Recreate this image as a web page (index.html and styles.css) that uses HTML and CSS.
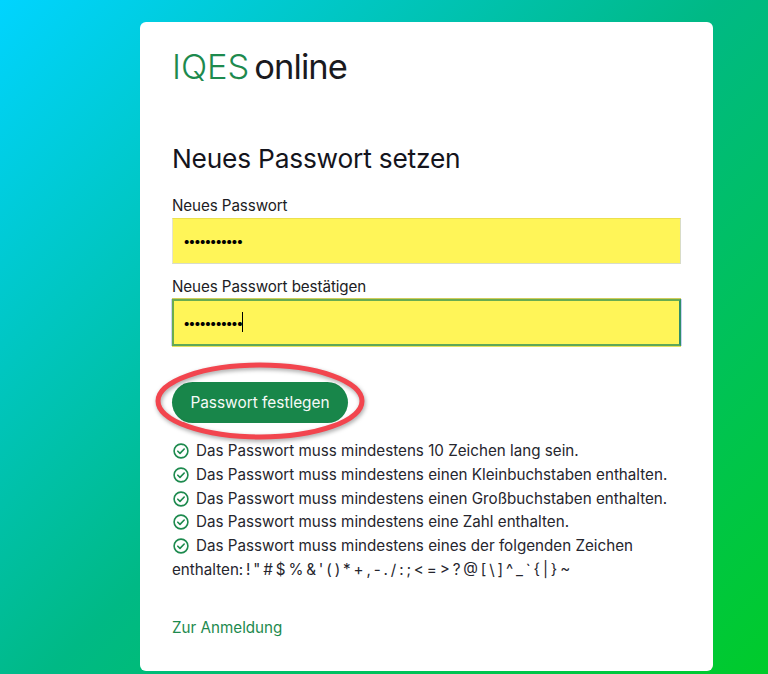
FILE: index.html
```html
<!DOCTYPE html>
<html lang="de">
<head>
<meta charset="utf-8">
<title>Neues Passwort setzen</title>
<link rel="stylesheet" href="styles.css">
</head>
<body>
<main class="card">
  <div class="logo"><span class="logo-iqes">IQES</span><span class="logo-online">online</span></div>
  <h1 class="title">Neues Passwort setzen</h1>
  <form class="form">
    <label class="label" for="p1">Neues Passwort</label>
    <div class="field"><input class="input" id="p1" type="password" value="aaaaaaaaaaa"></div>
    <label class="label label-second" for="p2">Neues Passwort bestätigen</label>
    <div class="field field-focus"><input class="input" id="p2" type="password" value="aaaaaaaaaaa"><span class="caret"></span></div>
    <div class="button-wrap">
      <button class="button" type="button">Passwort festlegen</button>
      <svg class="ring" viewBox="0 0 212 84" aria-hidden="true"><ellipse cx="106" cy="42" rx="102" ry="36" fill="none" stroke="#f2454e" stroke-width="5"/></svg>
    </div>
  </form>
  <ul class="rules">
    <li class="rule"><svg class="check" viewBox="0 0 16 16"><circle cx="8" cy="8" r="6.900"/><path d="M4.800 8.200l2.200 2.200 4.200-4.400"/></svg>Das Passwort muss mindestens 10 Zeichen lang sein.</li>
    <li class="rule"><svg class="check" viewBox="0 0 16 16"><circle cx="8" cy="8" r="6.900"/><path d="M4.800 8.200l2.200 2.200 4.200-4.400"/></svg>Das Passwort muss mindestens einen Kleinbuchstaben enthalten.</li>
    <li class="rule"><svg class="check" viewBox="0 0 16 16"><circle cx="8" cy="8" r="6.900"/><path d="M4.800 8.200l2.200 2.200 4.200-4.400"/></svg>Das Passwort muss mindestens einen Großbuchstaben enthalten.</li>
    <li class="rule"><svg class="check" viewBox="0 0 16 16"><circle cx="8" cy="8" r="6.900"/><path d="M4.800 8.200l2.200 2.200 4.200-4.400"/></svg>Das Passwort muss mindestens eine Zahl enthalten.</li>
    <li class="rule"><svg class="check" viewBox="0 0 16 16"><circle cx="8" cy="8" r="6.900"/><path d="M4.800 8.200l2.200 2.200 4.200-4.400"/></svg>Das Passwort muss mindestens eines der folgenden Zeichen <span class="symbols">enthalten: ! " # $ % &amp; ' ( ) * + , - . / : ; &lt; = &gt; ? @ [ \ ] ^ _ ` { | } ~</span></li>
  </ul>
  <a class="link" href="#">Zur Anmeldung</a>
</main>
</body>
</html>
```
FILE: styles.css
```css
* { box-sizing: border-box; }
html, body { margin: 0; height: 100%; }
body {
  height: 674px;
  overflow: hidden;
  padding: 22px 55px 3px 140px;
  background: linear-gradient(135deg, #00d4ff 0%, #00b985 50%, #00cb2a 100%);
  font-family: Inter, "Liberation Sans", sans-serif;
  color: #1c1c24;
}
.card {
  height: 649px;
  padding: 27px 32px 0;
  background: #fff;
  border-radius: 6px;
}
.logo {
  display: flex;
  align-items: baseline;
  height: 36px;
  font-size: 34.500px;
  line-height: 36px;
  letter-spacing: -0.9px;
}
.logo-iqes { color: #1d8a4e; font-weight: 300; margin-right: 5px; letter-spacing: -0.1px; }
.logo-online { color: #1a1a1e; font-weight: 400; }
.title {
  margin: 58px 0 0;
  font-size: 26.300px;
  line-height: 32px;
  font-weight: 400;
  color: #14141c;
  letter-spacing: -0.2px;
}
.form { margin-top: 21px; }
.label {
  display: block;
  font-size: 15.200px;
  line-height: 20px;
  height: 20px;
  letter-spacing: -0.1px;
}
.label-second { margin-top: 13px; }
.field {
  position: relative;
  height: 46px;
  margin-top: 2px;
  background: #fff558;
  border: 1px solid #e4e4cc;
  border-top-color: #ece04e;
  border-right-color: #d8dcc8;
  border-bottom-color: #d8dcc8;
}
.field-focus {
  height: 47px;
  margin-top: 2px;
  border: 2px solid #69ac50;
  border-right-color: #2f8f6a;
  border-bottom-color: #5fa858;
  box-shadow: 0 -1px #d0cc5c, 0 1px #e6e25e, 1px 0 #c8d4f4, -1px 0 #c8d4f4;
}
.input {
  display: block;
  width: 100%;
  height: 100%;
  padding: 0 10px;
  border: 0;
  background: transparent;
  font-family: Inter, "Liberation Sans", sans-serif;
  font-size: 13px;
  letter-spacing: -2px;
  color: #000;
  outline: 0;
}
.field-focus .input { padding: 0 9px; }
.caret {
  position: absolute;
  left: 68px;
  top: 11px;
  width: 1px;
  height: 20px;
  background: #000;
}
.button-wrap {
  position: relative;
  display: flex;
  margin-top: 36px;
}
.button {
  width: 176px;
  height: 41px;
  border: 0;
  border-radius: 21px;
  background: #18864a;
  color: #f6faf7;
  font-family: Inter, "Liberation Sans", sans-serif;
  font-size: 15.400px;
  padding: 0;
}
.ring {
  position: absolute;
  left: -18px;
  top: -23px;
  width: 212px;
  height: 84px;
  overflow: visible;
  filter: drop-shadow(1px 2px 2px rgba(0, 0, 0, 0.35));
  pointer-events: none;
}
.rules {
  list-style: none;
  margin: 16px 0 0;
  padding: 0;
}
.rule {
  font-size: 15.200px;
  line-height: 23.800px;
  color: #26262e;
}
.symbols { word-spacing: -1.400px; }
.check {
  display: inline-block;
  width: 16px;
  height: 16px;
  margin: 0 7px 0 1px;
  vertical-align: -3px;
  fill: none;
  stroke: #1d8a4e;
  stroke-width: 1.600;
  stroke-linecap: round;
  stroke-linejoin: round;
}
.link {
  display: block;
  margin-top: 34px;
  font-size: 15.200px;
  line-height: 24px;
  color: #1d8a4e;
  text-decoration: none;
}
```
